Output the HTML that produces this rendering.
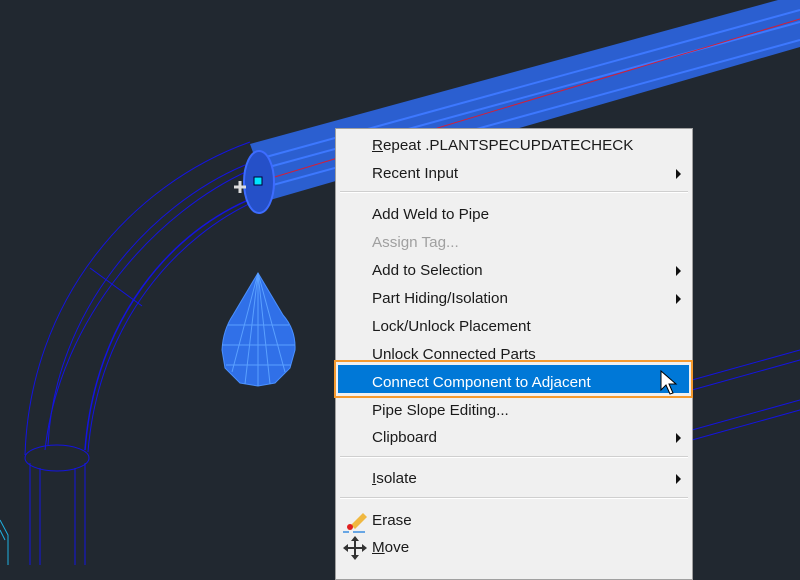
<!DOCTYPE html>
<html><head><style>
body{margin:0;width:800px;height:565px;overflow:hidden;background:#212830;font-family:"Liberation Sans",sans-serif;position:relative}
svg{position:absolute;left:0;top:0}
.menu{position:absolute;left:335px;top:128px;width:356px;height:450px;background:#f0f0f0;border:1px solid #a0a0a0}
.it{position:absolute;left:36px;font-size:15.2px;color:#1a1a1a;line-height:20px}
.dis{color:#a0a0a0}
.ar{position:absolute;left:340px;width:0;height:0;border-left:5px solid #111;border-top:5px solid transparent;border-bottom:5px solid transparent}
.sep{position:absolute;left:4px;right:4px;height:1px;background:#cfcfcf;border-bottom:1px solid #fff}
.hl{position:absolute;left:-2px;top:231px;width:359px;height:38px;border:2px solid #f59a2f;box-sizing:border-box}
.hl div{position:absolute;left:2px;right:2px;top:3px;bottom:3px;background:#0078d7}
</style></head><body>
<svg width="800" height="565">
<g fill="none" stroke="#1414e0" stroke-width="1">
<path d="M250 142 C130 185 30 300 25 455"/>
<path d="M245 165 C150 205 55 310 48 445"/>
<path d="M250 170 C160 210 60 315 45 450"/>
<path d="M258 196 C170 230 95 320 85 450" stroke-width="1.5"/>
<path d="M262 198 C175 235 98 325 88 452"/>
<path d="M90 268 L142 306"/>
<ellipse cx="57" cy="458" rx="32" ry="13"/>
<path d="M30 463V565 M40 468V565 M75 468V565 M85 463V565"/>
<path d="M692 380 L800 350 M692 390 L800 360 M692 430 L800 400 M692 440 L800 410"/>
</g>
<polygon points="250,144 800,-6 800,47 270,200" fill="#2b5fd0"/>
<path d="M255 160 L800 10 M258 170 L800 22 M262 188 L800 40" stroke="#3d78ff" stroke-width="2"/>
<path d="M258 182 L800 19" stroke="#d0203a" stroke-width="1"/>
<ellipse cx="259" cy="182" rx="15" ry="31" fill="#2550c8" stroke="#3d6cff" stroke-width="2"/>
<rect x="254" y="177" width="8" height="8" fill="#00e5ff" stroke="#003" stroke-width="1"/>
<path d="M240 181v12M234 187h12" stroke="#ddd" stroke-width="3"/>
<path d="M258 273 L283 315 Q296 330 295 350 L290 368 L275 383 L258 386 L240 383 L225 368 L222 350 Q223 330 233 315 Z" fill="#3070e8" stroke="#4a90ff"/>
<path d="M258 273 L245 384 M258 273 L270 384 M258 273 L232 372 M258 273 L285 372 M258 273 L258 386 M228 325 H289 M222 345 H295 M226 365 H291" stroke="#5aa0ff" stroke-width="1" fill="none"/>
<path d="M0 520 L8 535 L8 565 M0 530 L5 540" stroke="#1fb0e0" fill="none"/>
</svg>
<div class="menu">
<div class="it" style="top:7px"><u>R</u>epeat .PLANTSPECUPDATECHECK</div>
<div class="it" style="top:35px">Recent Input</div><div class="ar" style="top:40px"></div>
<div class="sep" style="top:62px"></div>
<div class="it" style="top:76px">Add Weld to Pipe</div>
<div class="it dis" style="top:104px">Assign Tag...</div>
<div class="it" style="top:132px">Add to Selection</div><div class="ar" style="top:137px"></div>
<div class="it" style="top:160px">Part Hiding/Isolation</div><div class="ar" style="top:165px"></div>
<div class="it" style="top:188px">Lock/Unlock Placement</div>
<div class="it" style="top:216px">Unlock Connected Parts</div>
<div class="hl"><div></div></div>
<div class="it" style="top:244px;color:#fff">Connect Component to Adjacent</div>
<div class="it" style="top:272px">Pipe Slope Editing...</div>
<div class="it" style="top:299px">Clipboard</div><div class="ar" style="top:304px"></div>
<div class="sep" style="top:327px"></div>
<div class="it" style="top:340px"><u>I</u>solate</div><div class="ar" style="top:345px"></div>
<div class="sep" style="top:368px"></div>
<div class="it" style="top:382px">Erase</div>
<div class="it" style="top:409px"><u>M</u>ove</div>
<svg style="left:5px;top:378px" width="28" height="56">
<path d="M10 18 L22 6 L26 10 L14 22 Z" fill="#f0b840"/><circle cx="9" cy="20" r="3" fill="#e02020"/>
<path d="M2 25h6M12 25h12" stroke="#3a8de0" stroke-width="1.5"/>
<path d="M14 31v20M4 41h20" stroke="#333" stroke-width="2"/>
<path d="M14 29l-4 5h8zM14 53l-4-5h8zM2 41l5-4v8zM26 41l-5-4v8z" fill="#333"/>
</svg>
</div>
<svg style="left:660px;top:370px" width="20" height="28"><path d="M1 1 L1 20 L6 15 L10 24 L13 23 L9 14 L16 14 Z" fill="#fff" stroke="#000"/></svg>
</body></html>
